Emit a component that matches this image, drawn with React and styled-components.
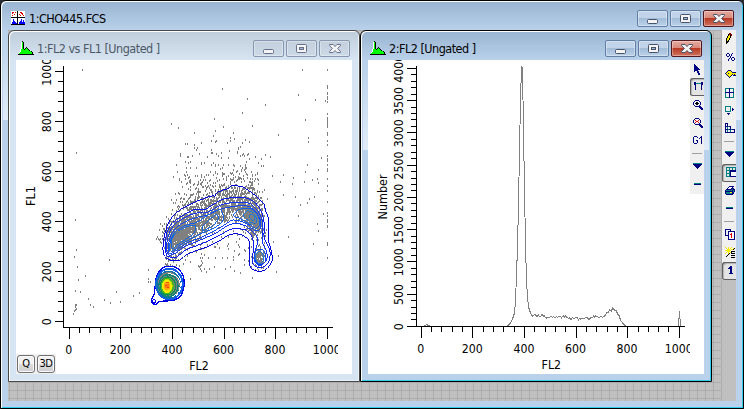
import React from 'react'
import styled, { createGlobalStyle, css } from 'styled-components'

/* ---------- helpers ---------- */

const createRandom = seed => () => {
  seed = (seed * 1664525 + 1013904223) % 4294967296
  return seed / 4294967296
}

const smoothPath = points => {
  const count = points.length
  const at = index => points[(index + count) % count]
  let d = `M${points[0].join(' ')}`
  for (let i = 0; i < count; i++) {
    const [p0, p1, p2, p3] = [at(i - 1), at(i), at(i + 1), at(i + 2)]
    const c1 = [p1[0] + (p2[0] - p0[0]) / 6, p1[1] + (p2[1] - p0[1]) / 6]
    const c2 = [p2[0] - (p3[0] - p1[0]) / 6, p2[1] - (p3[1] - p1[1]) / 6]
    d += `C${[...c1, ...c2, ...p2].map(n => n.toFixed(1)).join(' ')}`
  }
  return d + 'Z'
}

const toDots = points => points.map(([x, y]) => `M${Math.round(x)} ${Math.round(y)}h1v2h-1z`).join('')

/* ---------- scatter data ---------- */

const spine = [[170, 243], [175, 237], [181, 230], [189, 224], [200, 219], [212, 213], [224, 206], [236, 204], [247, 208], [255, 218], [258, 229]]

const buildCloud = () => {
  const random = createRandom(445)
  const gauss = () => random() + random() + random() + random() - 2
  const points = []
  const alongSpine = t => {
    const position = Math.min(t * (spine.length - 1), spine.length - 1.001)
    const i = Math.floor(position)
    const f = position - i
    return [spine[i][0] + (spine[i + 1][0] - spine[i][0]) * f, spine[i][1] + (spine[i + 1][1] - spine[i][1]) * f]
  }
  for (let i = 0; i < 1750; i++) {
    const [x, y] = alongSpine(random())
    points.push([x + gauss() * 7, y + gauss() * 13])
  }
  for (let i = 0; i < 640; i++) {
    const [x, y] = alongSpine(0.15 + random() * 0.8)
    points.push([x + gauss() * 9, y - 8 + Math.log(1 - random()) * 18])
  }
  for (let i = 0; i < 430; i++) points.push([181 + gauss() * 15, 234 + gauss() * 13])
  for (let i = 0; i < 200; i++) points.push([252 + gauss() * 9, 217 + gauss() * 12])
  for (let i = 0; i < 150; i++) points.push([259 + gauss() * 5, 257 + gauss() * 9])
  for (let i = 0; i < 110; i++) points.push([165 + random() * 100, 226 + random() * 44])
  for (let i = 0; i < 30; i++) points.push([164 + random() * 12, 255 + random() * 12])
  return points
}

const outliers = [
  [82, 69], [302, 69], [298, 94], [265, 104], [315, 99], [325, 100], [305, 119], [171, 123], [214, 118], [223, 126],
  [194, 132], [215, 130], [213, 135], [211, 140], [201, 142], [249, 141], [234, 138], [278, 134], [308, 137], [308, 141],
  [196, 149], [221, 152], [180, 155], [255, 156], [270, 156], [321, 157], [307, 164], [176, 164], [185, 161], [283, 174],
  [305, 171], [318, 169], [293, 177], [292, 183], [280, 181], [304, 181], [312, 179], [317, 178], [318, 182], [283, 194],
  [295, 196], [309, 198], [314, 196], [300, 204], [307, 202], [298, 215], [317, 223], [318, 230], [323, 213], [288, 236],
  [313, 243], [273, 241], [278, 255], [276, 271], [240, 272], [252, 277], [75, 219], [76, 249], [74, 256], [77, 266],
  [85, 275], [78, 279], [75, 290], [80, 291], [109, 259], [116, 291], [88, 298], [90, 304], [93, 306], [104, 299],
  [110, 302], [120, 301], [75, 304], [76, 308], [75, 306], [74, 310], [73, 313], [75, 309], [76, 304], [133, 295],
  [139, 292], [148, 281], [150, 281], [148, 269], [148, 278], [165, 266], [190, 278], [200, 265], [206, 271], [159, 229],
  [76, 152]
]

const saturated = [69, 85, 87, 92, 93, 96, 98, 101, 113, 117, 118, 120, 122, 124, 126, 132, 134, 140, 144, 155, 158, 160, 164, 168, 170, 178, 185, 190, 201, 212, 215, 219, 221, 225, 226, 242, 244, 257]

/* contour levels, in thirds of a pixel */
const arcLevels = [
  ['#0000d8', [[99, 262], [105, 220], [120, 180], [150, 150], [190, 128], [215, 118], [245, 108], [255, 108], [262, 98], [280, 90], [295, 86], [302, 78], [312, 75], [325, 78], [345, 85], [365, 98], [385, 115], [402, 132], [406, 150], [415, 175], [415, 235], [423, 270], [427, 295], [422, 312], [408, 328], [388, 334], [368, 328], [359, 315], [360, 275], [358, 245], [345, 230], [325, 222], [300, 224], [275, 238], [250, 252], [220, 265], [190, 275], [165, 287], [150, 300], [128, 302], [104, 289]]],
  ['#0a1cf0', [[108, 280], [108, 230], [122, 195], [150, 172], [190, 150], [225, 148], [255, 130], [290, 115], [345, 113], [375, 128], [392, 150], [402, 185], [403, 235], [418, 265], [420, 290], [412, 312], [390, 323], [372, 315], [366, 300], [371, 265], [368, 235], [350, 213], [322, 205], [300, 209], [270, 225], [235, 243], [200, 257], [165, 271], [140, 291], [115, 290]]],
  ['#1133f5', [[113, 282], [112, 238], [128, 200], [155, 178], [195, 160], [230, 158], [260, 142], [290, 130], [345, 127], [370, 138], [388, 160], [398, 190], [397, 220], [398, 250], [410, 275], [409, 302], [390, 314], [375, 300], [375, 275], [383, 248], [380, 228], [365, 213], [345, 197], [318, 190], [295, 196], [265, 215], [230, 232], [195, 247], [160, 262], [135, 280]]],
  ['#124af0', [[117, 278], [117, 245], [132, 210], [160, 188], [200, 172], [235, 165], [265, 150], [295, 142], [345, 137], [372, 150], [390, 178], [389, 209], [372, 210], [345, 189], [310, 180], [285, 194], [250, 214], [215, 232], [180, 245], [150, 262], [132, 276]]],
  ['#1260ee', [[120, 272], [122, 240], [138, 213], [170, 195], [200, 187], [225, 172], [250, 155], [272, 150], [280, 170], [275, 188], [250, 205], [215, 220], [185, 235], [150, 255], [133, 270]]],
  ['#1468e4', [[124, 262], [127, 235], [145, 213], [172, 200], [196, 196], [194, 216], [175, 233], [148, 250], [133, 263]]],
  ['#1468e4', [[217, 210], [222, 194], [240, 178], [258, 164], [265, 176], [250, 196], [230, 208]]],
  ['#1260ee', [[310, 165], [325, 150], [350, 145], [370, 150], [385, 170], [388, 195], [378, 205], [362, 195], [340, 180], [318, 172]]],
  ['#1a78dc', [[340, 165], [352, 153], [370, 158], [378, 172], [379, 190], [365, 188], [350, 178]]],
  ['#1a78dc', [[358, 170], [365, 162], [374, 171], [370, 182]]]
]

const blobOutline = [[72, 405], [76, 375], [80, 348], [95, 325], [112, 319], [135, 321], [155, 338], [162, 360], [161, 385], [153, 407], [135, 420], [105, 423], [86, 425], [80, 432], [68, 430], [64, 418]]

const blobLevels = [
  { cx: 118, cy: 372, rx: 40, ry: 46, fill: 'none', stroke: '#125ae8', width: 6 },
  { cx: 116, cy: 374, rx: 35, ry: 40, fill: '#808080', stroke: '#0c74a8', width: 4 },
  { cx: 119, cy: 376, rx: 32, ry: 35, fill: 'none', stroke: '#fff', width: 3 },
  { cx: 115, cy: 377, rx: 29, ry: 33, fill: '#808080', stroke: '#078577', width: 4 },
  { cx: 114, cy: 378, rx: 23, ry: 27, fill: '#808080', stroke: '#0b9150', width: 4 },
  { cx: 112, cy: 378, rx: 18, ry: 23, fill: '#b4d800', stroke: '#49b51e', width: 4 },
  { cx: 111, cy: 379, rx: 13, ry: 18, fill: '#ffe000', stroke: '#e8f000', width: 4 },
  { cx: 111, cy: 378, rx: 8, ry: 10, fill: '#ff7a18', stroke: '#ffab00', width: 4 }
]

/* ---------- pixel icons ---------- */

const ink = { N: '#000080', T: '#008080', K: '#000', Y: '#f8f000', R: '#e00000', W: '#fff', G: '#808080', M: '#800000', B: '#0000ff', L: '#00ff00', C: '#f0f0f0' }

const icons = {
  pencil: [3, 3, ['    MM ', '   KMMM', '   KYKM', '  KYYK ', '  KYYK ', ' KYYK  ', ' KYYK  ', ' KYK   ', ' KKK   ', ' KK    ', ' K     ']],
  percent: [4, 5, [' NN   N ', 'N  N N  ', 'N  N N  ', ' NN N   ', '    N NN', '   N N  N', '  N  N  N', '  N   NN']],
  key: [3, 4, ['   NNN     ', '  NYYYN    ', ' NYYYYYNNNN', 'NYYNYYYYYYY', ' NYYYYYNYNY', '  NYYYN NNN', '   NYN     ', '    N      ']],
  quadrants: [3, 4, ['TTTTNTTTT', 'T   N   T', 'T   N   T', 'T   N   T', 'NNNNNNNNN', 'T   N   T', 'T   N   T', 'T   N   T', 'T   N   T', 'TTTTNTTTT']],
  resize: [3, 4, ['TTTTTT   ', 'TCCCCT   ', 'TCCCCT N ', 'TCCCCT NN', 'TCCCCT N ', 'TTTTTT   ', '         ', '  NNN    ', '   N     ']],
  stairs: [3, 3, ['NNN       ', 'N N       ', 'N N       ', 'NNNTNN    ', 'N T  N    ', 'N T  N    ', 'NNNTNNTNNN', 'N T  T   N', 'N T  T   N', 'NNNNNNNNNN']],
  down: [3, 5, ['TTTTTTTTT', 'NNNNNNNNN', ' NNNNNNN ', '  NNNNN  ', '   NNN   ', '    N    ']],
  table: [4, 3, ['TTTTTTTTTT', 'T  T  T  T', 'T  T  T  T', 'TTTTNNNNNN', 'T  TNNNNNN', 'T  TNWWWWW', 'TTTTNWWWWW', 'T  TNWWWWW', 'T  TNWWWWW', 'TTTTNNNNNN']],
  printer: [3, 4, ['    NNNNN ', '   NWWWN  ', '  NWWWNNN ', ' NNNNNNTNN', 'NTTTTTTNTN', 'NNNNNNNNTN', 'NTTTTYYNN ', 'NTTTTTTNN ', ' NNNNNNN  ']],
  minus: [4, 7, ['TTTTTTT', 'NNNNNNN']],
  pages: [3, 3, ['NNNNNN    ', 'N    N    ', 'N  NNNNNNN', 'N  NWWWWWN', 'N  NWWRWWN', 'N  NWRRWWN', 'NNNNWWRWWN', '   NWWRWWN', '   NWWRWWN', '   NWWWWWN', '   NNNNNNN']],
  wizard: [3, 3, ['Y  Y  Y   ', ' Y Y Y  YK', '  YYY YYK ', 'YYYYYY    ', '  YYY KKKK', ' Y Y YK   ', 'Y  YK KKKK', '   K      ', '  K   KKKK', ' K        ', '      KKKK']],
  one: [6, 4, ['  NN ', ' NNN ', 'NNNN ', '  NN ', '  NN ', '  NN ', '  NN ', ' NNNN']],
  pointer: [4, 4, ['N      ', 'NN     ', 'NNN    ', 'NNNN   ', 'NNNNN  ', 'NNNNNN ', 'NNNN   ', 'N  NN  ', '   NN  ', '    NN ', '    NN ']],
  gate: [4, 4, ['NN     NN', 'NNTTTTTNN', 'NN     NN', ' N     N ', ' N     N ', ' N     N ', ' N     N ', ' N     N ']],
  zoomIn: [3, 4, ['  NNNN    ', ' N    N   ', 'N  KK  N  ', 'N KKKK N  ', 'N  KK  N  ', ' N    N   ', '  NNNNNN  ', '      NNN ', '       NNN', '        NN']],
  zoomOut: [3, 4, ['  NNNN    ', ' N    N   ', 'N R  R N  ', 'N  RR  N  ', 'N R  R N  ', ' N    N   ', '  NNNNNN  ', '      NNN ', '       NNN', '        NN']],
  g1: [3, 4, [' NNN    N', 'N   N  NN', 'N     N N', 'N       N', 'N  NN   N', 'N   N   N', 'N   N   N', ' NNN    N']],
  quad: [0, 0, ['WWWWWWKWWWWWWW', 'WRRWRWKWWRRWWW', 'WRWWWWKWWWRRWW', 'WWWRWWKWRWWRWW', 'WRWWWWKWWRWWRW', 'WWWWWWKWWWWWWW', 'KKKKKKKKKKKKKK', 'WWWWWWKWWWWWWW', 'WWBWWWKWWWBWWW', 'WWBWWWKWWWBWBW', 'WWBBWWKWWBBWBW', 'WBBBBWKWBBBBBB', 'WBBBBBKWBBBBBB', 'KKKKKKKKKKKKKK']],
  peak: [0, 0, ['    K           ', '   WLK          ', '   WLK          ', '   WLK          ', '   WLK          ', '   WLK          ', '   WLK  K       ', '   WLK KLK      ', '  WLLLKLLLK     ', '  WLLLLLLLLK    ', '  WLLLLLLLLLLK  ', ' WLLLLLLLLLLLLK ', ' LLLLLLLLLLLLLK ', 'KKKKKKKKKKKKKKKK']]
}

const PixelIcon = ({ name, width = 14, height = 18 }) => {
  const [left, top, rows] = icons[name]
  return (
    <StyledSvg width={width} height={height} shapeRendering="crispEdges">
      {rows.map((row, y) => [...row].map((code, x) => ink[code] && (
        <rect key={`${x}-${y}`} x={left + x} y={top + y} width="1" height="1" fill={ink[code]} />
      )))}
    </StyledSvg>
  )
}

const Palette = ({ items, pressed }) => (
  <StyledPalette>
    {items.map((item, index) => item === 'line'
      ? <StyledSeparator key={index} />
      : <StyledTool key={index} $pressed={pressed.includes(item)}><PixelIcon name={item} /></StyledTool>
    )}
  </StyledPalette>
)

/* ---------- window chrome ---------- */

const CaptionButtons = ({ active }) => {
  const line = active ? '#47536b' : '#66708a'
  return (
    <StyledCaptionButtons>
      <StyledCaptionButton $active={active}>
        <StyledSvg width="29" height="15">
          <rect x="9.5" y="8.5" width="10" height="4" rx="1" fill="#f4f4f4" stroke={line} />
        </StyledSvg>
      </StyledCaptionButton>
      <StyledCaptionButton $active={active}>
        <StyledSvg width="29" height="15">
          <rect x="9.5" y="3.5" width="10" height="8" rx="1" fill="#f4f4f4" stroke={line} />
          <rect x="12.5" y="6.5" width="4" height="2" fill="#9fb6d2" stroke={line} />
        </StyledSvg>
      </StyledCaptionButton>
      <StyledCaptionButton $active={active} $close>
        <StyledSvg width="29" height="15">
          <path d="M9.5 3.5h3.6l1.9 2 1.9-2h3.6v1l-2.9 3 2.9 3v1h-3.6l-1.9-2-1.9 2H9.5v-1l2.9-3-2.9-3z" fill="#f4f4f4" stroke={line} />
        </StyledSvg>
      </StyledCaptionButton>
    </StyledCaptionButtons>
  )
}

/* ---------- charts ---------- */

const Label = ({ x, y, length, rotated, children }) => (
  <text
    x={x}
    y={y}
    textAnchor="middle"
    textLength={length}
    lengthAdjust="spacingAndGlyphs"
    transform={rotated ? `rotate(-90 ${x} ${y})` : undefined}
  >
    {children}
  </text>
)

const range = count => Array.from({ length: count }, (_, index) => index)

const XAxis = ({ zero, step, y, from, to, baseline, longTick }) => (
  <g>
    <path
      d={`M${from} ${y}.5H${to}` + range(26).map(i => `M${Math.floor(zero + i * step / 5) + 0.5} ${y}v${i % 5 ? 6 : longTick}`).join('')}
      stroke="#000"
      shapeRendering="crispEdges"
    />
    {range(6).map(i => (
      <Label key={i} x={zero - 0.6 + i * step} y={baseline} length={[7, 21, 21, 21, 21, 28][i]}>{i * 200}</Label>
    ))}
  </g>
)

const YAxis = ({ zero, step, x, to, baseline, majors, unit, longTick }) => (
  <g>
    <path
      d={`M${x}.5 6V${to}` + range(majors * 5 + 1).map(i => `M${x} ${Math.floor(zero - i * step / 5) + 0.5}h-${i % 5 ? 5 : longTick}`).join('')}
      stroke="#000"
      shapeRendering="crispEdges"
    />
    {range(majors + 1).map(i => {
      const text = String(i * unit)
      return <Label key={i} x={baseline} y={zero + 0.4 - i * step} length={text.length * 7} rotated>{text}</Label>
    })}
  </g>
)

const ScatterPlot = () => (
  <StyledPlot width="322" height="314">
    <g transform="translate(-16 -60)" fill="#808080" shapeRendering="crispEdges">
      <path d={toDots(buildCloud())} />
      <path d={toDots(outliers)} />
      <path d={toDots(saturated.map(y => [327, y]))} />
    </g>
    <g transform="translate(114 100) scale(0.33333)" fill="none" shapeRendering="crispEdges">
      {arcLevels.map(([color, points], index) => (
        <path key={index} d={smoothPath(points)} stroke={color} strokeWidth="3" />
      ))}
      <ellipse cx="390" cy="292" rx="18" ry="25" stroke="#124af0" strokeWidth="3" />
      <ellipse cx="389" cy="293" rx="12" ry="18" stroke="#1a78dc" strokeWidth="3" />
      <path d={smoothPath(blobOutline)} fill="#fff" stroke="#0000e6" strokeWidth="4" />
      <circle cx="73" cy="424" r="5" stroke="#0000e6" strokeWidth="3" />
      {blobLevels.map(({ width, ...level }, index) => (
        <ellipse key={index} {...level} strokeWidth={width} />
      ))}
      <path d="M108 369h9M105 378h6M111 384h6" stroke="#f04a00" strokeWidth="3" />
    </g>
    <XAxis zero={53.3} step={51.6} y={267} from={47} to={317} baseline={294} longTick={12} />
    <YAxis zero={261.4} step={50} x={47} to={268} baseline={35.5} majors={5} unit={200} longTick={8} />
    <Label x={183} y={310} length={19.5}>FL2</Label>
    <Label x={18.5} y={136} length={20} rotated>FL1</Label>
  </StyledPlot>
)

const buildHistogram = () => {
  const random = createRandom(91)
  const plateau = []
  for (let x = 531; x <= 602; x++) {
    const level = x < 545 ? 316 : x < 570 ? 317 : x < 592 ? 318.5 : 317
    plateau.push([x, level + (random() - 0.5) * 2.6])
  }
  return [
    [421, 326], [424, 326], [426, 324.5], [429, 326], [507, 326], [510, 323], [512, 319], [514, 313], [515, 301], [516, 275],
    [517, 247], [518, 204], [519, 151], [520, 100], [521, 67], [522, 68], [523, 130], [524, 190], [525, 243], [526, 281],
    [527, 297], [528, 307], [530, 313], ...plateau, [605, 315], [606, 313], [608, 312], [609, 310], [611, 311], [612, 308],
    [614, 310], [616, 311], [617, 314], [618, 314], [620, 320], [622, 323], [625, 326], [678, 326], [679, 311], [680, 326]
  ]
}

const HistogramPlot = () => (
  <StyledPlot width="322" height="314">
    <g transform="translate(-368 -60)">
      <polyline
        points={buildHistogram().map(([x, y]) => `${x + 0.5},${y}`).join(' ')}
        fill="none"
        stroke="#808080"
        shapeRendering="crispEdges"
      />
    </g>
    <XAxis zero={53.3} step={51.6} y={266} from={39} to={317} baseline={293} longTick={12} />
    <YAxis zero={266.4} step={32.25} x={48} to={267} baseline={35} majors={8} unit={500} longTick={9} />
    <Label x={183.3} y={309} length={19.5}>FL2</Label>
    <Label x={19} y={137} length={45} rotated>Number</Label>
  </StyledPlot>
)

/* ---------- application ---------- */

const plotTools = ['pointer', 'gate', 'zoomIn', 'zoomOut', 'g1', 'line', 'down', 'minus']
const mainTools = ['pencil', 'percent', 'key', 'quadrants', 'resize', 'stairs', 'line', 'down', 'table', 'printer', 'minus', 'line', 'pages', 'wizard', 'one']

const App = () => (
  <>
    <GlobalStyle />
    <StyledMainWindow>
      <StyledMainTitleBar>
        <PixelIcon name="quad" width={14} height={14} />
        <StyledTitle>1:CHO445.FCS</StyledTitle>
        <CaptionButtons active />
      </StyledMainTitleBar>
      <StyledClient>
        <StyledDesktop>
          <StyledChildWindow>
            <StyledChildTitleBar>
              <PixelIcon name="peak" width={16} height={14} />
              <StyledTitle $muted>1:FL2 vs FL1 [Ungated ]</StyledTitle>
              <CaptionButtons />
            </StyledChildTitleBar>
            <StyledDocument>
              <ScatterPlot />
              <StyledPlotButtons>
                <StyledPlotButton>Q</StyledPlotButton>
                <StyledPlotButton>3D</StyledPlotButton>
              </StyledPlotButtons>
            </StyledDocument>
          </StyledChildWindow>
          <StyledChildWindow $active>
            <StyledChildTitleBar>
              <PixelIcon name="peak" width={16} height={14} />
              <StyledTitle>2:FL2 [Ungated ]</StyledTitle>
              <CaptionButtons active />
            </StyledChildTitleBar>
            <StyledDocument>
              <HistogramPlot />
              <Palette items={plotTools} pressed={['gate']} />
            </StyledDocument>
          </StyledChildWindow>
        </StyledDesktop>
        <Palette items={mainTools} pressed={['table', 'one']} />
      </StyledClient>
    </StyledMainWindow>
  </>
)

export default App

const GlobalStyle = createGlobalStyle`
  * {
    box-sizing: border-box;
  }

  body {
    margin: 0;
    background: #2b2b33;
    font-family: 'DejaVu Sans Condensed', 'DejaVu Sans', 'Noto Sans', sans-serif;
    font-stretch: condensed;
    font-size: 12px;
    overflow: hidden;
  }
`

const StyledSvg = styled.svg`
  display: block;
  flex: none;
`

const activeFrame = css`
  border: 1px solid #000;
  background-color: #b9d1ea;
  background-image:
    linear-gradient(#b9d1ea, #e1ecf9),
    linear-gradient(#b9d1ea, #e1ecf9),
    linear-gradient(#99b4d1, #b9d1ea);
  background-repeat: no-repeat;
  background-position: 2px 29px, right 2px top 29px, 0 0;
  background-size: 5px 90px, 5px 90px, 100% 29px;
  box-shadow: inset 1px 1px #fff, inset -1px -1px #2fcdee;
`

const StyledMainWindow = styled.div`
  ${activeFrame}
  display: flex;
  flex-direction: column;
  width: 744px;
  height: 409px;
  padding: 0 7px 7px;
  border-radius: 6px 6px 0 0;
`

const StyledMainTitleBar = styled.div`
  display: flex;
  flex: none;
  gap: 4px;
  height: 29px;
  padding: 10px 2px 0 3px;
`

const StyledTitle = styled.div`
  flex: 1;
  font-size: 12.5px;
  line-height: 15px;
  white-space: pre;
  letter-spacing: -0.5px;
  color: ${({ $muted }) => $muted ? '#4b5867' : '#000'};
`

const StyledClient = styled.div`
  display: flex;
  flex: 1;
  background: #c0c0c0;
`

const StyledDesktop = styled.div`
  display: flex;
  align-items: flex-start;
  width: 714px;
  background-image:
    linear-gradient(90deg, #adadad 1px, transparent 1px),
    linear-gradient(#adadad 1px, transparent 1px);
  background-size: 8px 8px;
  background-position: 1px 0;
`

const StyledChildWindow = styled.div`
  ${({ $active }) => $active ? activeFrame : css`
    border: 1px solid #484848;
    background: linear-gradient(#bfcddb, #d7e4f2 29px);
    box-shadow: inset 1px 1px #fff, inset -1px -1px #eaf1f8;
  `}
  width: 352px;
  height: 352px;
  padding: 0 7px 7px;
  border-radius: 6px 6px 0 0;
`

const StyledChildTitleBar = styled.div`
  display: flex;
  gap: 3px;
  height: 29px;
  padding: 10px 2px 0;
`

const StyledCaptionButtons = styled.div`
  display: flex;
  gap: 2px;
  margin-top: -1px;
`

const StyledCaptionButton = styled.div`
  width: 31px;
  height: 17px;
  border: 1px solid ${({ $active }) => $active ? '#6280a5' : '#8797b0'};
  border-radius: 2px;
  background: ${({ $active }) => $active ? 'linear-gradient(#c1d3e8 45%, #a3bcd8 50%, #bcd2ea)' : 'linear-gradient(#c3cfdc, #ccd9e7)'};
  box-shadow: inset 0 0 0 1px rgba(255, 255, 255, 0.35);

  ${({ $active, $close }) => $active && $close && css`
    border-color: #52171c;
    background: linear-gradient(#e5aaa0 0, #d98a7c 45%, #b83a24 50%, #cf735f);
  `}
`

const StyledDocument = styled.div`
  position: relative;
  display: flex;
  align-items: flex-start;
  width: 336px;
  height: 314px;
  background: #fff;
`

const StyledPlot = styled.svg`
  display: block;
  flex: none;
  overflow: hidden;
  font-size: 12px;
`

const StyledPlotButtons = styled.div`
  position: absolute;
  left: 0;
  bottom: 0;
  display: flex;
  gap: 2px;
  padding: 1px;
  background: #f0f0f0;
`

const StyledPlotButton = styled.div`
  width: 18px;
  height: 18px;
  border: 1px solid #707070;
  border-radius: 3px;
  background: linear-gradient(#f2f2f2 50%, #dcdcdc 50%, #cfcfcf);
  box-shadow: inset 0 0 0 1px #fafafa;
  font-size: 11px;
  line-height: 15px;
  letter-spacing: -0.5px;
  text-align: center;
`

const StyledPalette = styled.div`
  flex: none;
  align-self: flex-start;
  width: 14px;
  background: #f0f0f0;
`

const StyledTool = styled.div`
  width: 14px;
  height: 18px;
  overflow: hidden;

  ${({ $pressed }) => $pressed && css`
    background: #e4e4e4;
    border-radius: 3px 0 0 3px;
    box-shadow: inset 1px 1px #606060, inset 0 -1px #606060, inset 2px 2px 1px #b4b4b4;
  `}
`

const StyledSeparator = styled.div`
  height: 8px;
  margin-left: 2px;
  margin-right: 2px;
  background: linear-gradient(#a0a0a0, #a0a0a0) 0 3px / 100% 1px no-repeat;
`
